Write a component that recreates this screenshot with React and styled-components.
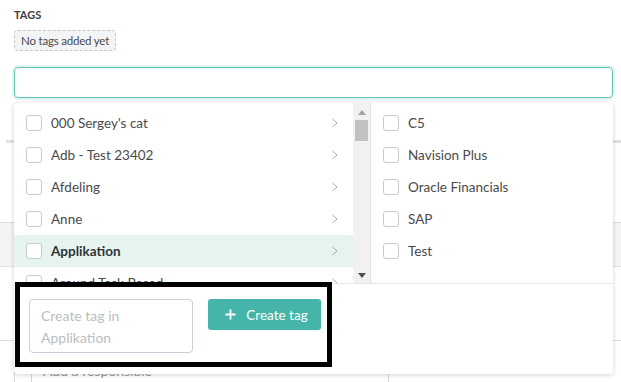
import styled, { createGlobalStyle } from 'styled-components';

const GlobalStyle = createGlobalStyle`
  body {
    margin: 0;
    background: #fff;
    font-family: Lato, "Open Sans", sans-serif;
  }
`;

const leftTags = [
  { name: "000 Sergey's cat" },
  { name: 'Adb - Test 23402' },
  { name: 'Afdeling' },
  { name: 'Anne' },
  { name: 'Applikation', active: true },
  { name: 'Around Task Based' },
];

const rightTags = ['C5', 'Navision Plus', 'Oracle Financials', 'SAP', 'Test'];

export default function App() {
  return (
    <>
      <GlobalStyle />
      <Page>
        <Section>
          <Label>Tags</Label>
          <Chip>No tags added yet</Chip>
          <Search />
        </Section>

        <Backdrop>
          <Divider />
          <GreyBand />
          <Rule />
          <ResponsibleInput>
            <Gutter />
            <span>Add a responsible</span>
          </ResponsibleInput>
        </Backdrop>

        <Dropdown>
          <Columns>
            <LeftColumn>
              {leftTags.map((t) => (
                <Row key={t.name} $active={t.active}>
                  <Box />
                  <RowText $active={t.active}>{t.name}</RowText>
                  <Chevron viewBox="0 0 8 10">
                    <polyline points="1.5,1 6,5 1.5,9" />
                  </Chevron>
                </Row>
              ))}
            </LeftColumn>
            <Scrollbar>
              <Arrow viewBox="0 0 8 5">
                <polygon points="0,5 4,0 8,5" />
              </Arrow>
              <Thumb />
              <Track />
              <Arrow viewBox="0 0 8 5" $dark>
                <polygon points="0,0 8,0 4,5" />
              </Arrow>
            </Scrollbar>
            <RightColumn>
              {rightTags.map((t) => (
                <Row key={t}>
                  <Box />
                  <RowText>{t}</RowText>
                </Row>
              ))}
            </RightColumn>
          </Columns>
          <Footer>
            <Marked>
              <NewTag placeholder={'Create tag in\nApplikation'} rows={2} />
              <CreateButton>
                <svg width="11" height="11" viewBox="0 0 11 11">
                  <path d="M5.5 0.5v10M0.5 5.5h10" stroke="#fff" strokeWidth="1.8" />
                </svg>
                Create tag
              </CreateButton>
            </Marked>
          </Footer>
        </Dropdown>
      </Page>
    </>
  );
}

const Page = styled.div`
  position: relative;
  width: 621px;
  height: 382px;
  overflow: hidden;
`;

const Section = styled.div`
  padding: 9px 8px 0 14px;
  display: flex;
  flex-direction: column;
  align-items: flex-start;
`;

const Label = styled.div`
  font-size: 11px;
  font-weight: 700;
  text-transform: uppercase;
  color: #3d3d3d;
  line-height: 11px;
`;

const Chip = styled.div`
  margin-top: 10px;
  height: 21px;
  padding: 0 6px;
  box-sizing: border-box;
  display: flex;
  align-items: center;
  font-size: 11.5px;
  letter-spacing: -0.2px;
  color: #4a4a4a;
  background: #f3f4f6;
  border: 1px dashed #c4c8ce;
  border-radius: 4px;
`;

const Search = styled.div`
  margin-top: 16px;
  width: 599px;
  height: 31px;
  box-sizing: border-box;
  border: 1px solid #5fc4b3;
  border-radius: 4px;
  box-shadow: 0 0 0 2px rgba(95, 196, 179, 0.18);
`;

const Backdrop = styled.div`
  display: flex;
  flex-direction: column;
`;

const Divider = styled.div`
  margin: 42px 0 0 6px;
  height: 3px;
  background: #dfe0e3;
`;

const GreyBand = styled.div`
  margin-top: 79px;
  height: 43px;
  background: #f4f4f5;
  border-top: 1px solid #dcdcdc;
  border-bottom: 1px solid #e2e2e2;
`;

const Rule = styled.div`
  margin-top: 73px;
  height: 1px;
  background: #dcdcdc;
`;

const ResponsibleInput = styled.div`
  margin: 25px 0 0 14px;
  width: 373px;
  height: 30px;
  display: flex;
  align-items: flex-start;
  gap: 11px;
  border-left: 1px solid #d3d6db;
  border-right: 1px solid #d3d6db;
  font-size: 14px;
  color: #9a9a9a;
  line-height: 10px;
`;

const Gutter = styled.div`
  width: 16px;
  height: 30px;
  border-right: 1px solid #d3d6db;
`;

const Dropdown = styled.div`
  position: absolute;
  left: 14px;
  top: 103px;
  width: 599px;
  height: 271px;
  background: #fff;
  border-radius: 4px;
  box-shadow: 0 1px 5px rgba(0, 0, 0, 0.18);
  display: flex;
  flex-direction: column;
  overflow: hidden;
`;

const Columns = styled.div`
  display: flex;
  height: 180px;
`;

const LeftColumn = styled.div`
  width: 339px;
  padding-top: 4px;
  overflow: hidden;
`;

const RightColumn = styled.div`
  flex: 1;
  padding-top: 4px;
  border-left: 1px solid #dde1e6;
`;

const Row = styled.div`
  height: 32px;
  display: flex;
  align-items: center;
  padding: 0 14px 0 12px;
  background: ${(p) => (p.$active ? '#e6f4f0' : 'transparent')};
`;

const Box = styled.div`
  width: 16px;
  height: 16px;
  box-sizing: border-box;
  border: 1px solid #c5cad2;
  border-radius: 3px;
  background: #fff;
  flex-shrink: 0;
`;

const RowText = styled.span`
  margin-left: 9px;
  flex: 1;
  font-size: 13.5px;
  color: ${(p) => (p.$active ? '#2f3337' : '#4a4a4a')};
  font-weight: ${(p) => (p.$active ? 700 : 400)};
  white-space: nowrap;
`;

const Chevron = styled.svg`
  width: 8px;
  height: 10px;
  fill: none;
  stroke: #a7a7a7;
  stroke-width: 1;
`;

const Scrollbar = styled.div`
  width: 17px;
  background: #f1f1f1;
  display: flex;
  flex-direction: column;
  align-items: center;
  padding: 7px 0 5px;
  box-sizing: border-box;
`;

const Arrow = styled.svg`
  width: 8px;
  height: 5px;
  fill: ${(p) => (p.$dark ? '#505050' : '#a3a3a3')};
`;

const Thumb = styled.div`
  margin-top: 5px;
  width: 13px;
  height: 21px;
  background: #c1c1c1;
`;

const Track = styled.div`
  flex: 1;
`;

const Footer = styled.div`
  flex: 1;
  border-top: 1px solid #e6e6e6;
`;

const Marked = styled.div`
  margin: -2px 0 0 1px;
  width: 317px;
  height: 85px;
  box-sizing: border-box;
  border: 5px solid #000;
  padding: 12px 0 0 9px;
  display: flex;
  align-items: flex-start;
  gap: 15px;
`;

const NewTag = styled.textarea`
  width: 164px;
  height: 54px;
  box-sizing: border-box;
  resize: none;
  border: 1px solid #c9d0da;
  border-radius: 4px;
  padding: 5px 11px;
  font-family: Lato, "Open Sans", sans-serif;
  font-size: 14px;
  line-height: 22px;
  color: #333;
  outline: none;
  overflow: hidden;

  &::placeholder {
    color: #bdbdbd;
  }
`;

const CreateButton = styled.button`
  width: 113px;
  height: 31px;
  border: none;
  border-radius: 3px;
  background: #45b5a9;
  color: #fff;
  font-family: Lato, "Open Sans", sans-serif;
  font-size: 13.5px;
  display: flex;
  align-items: center;
  justify-content: center;
  gap: 10px;
  padding: 0 0 0 4px;
`;
